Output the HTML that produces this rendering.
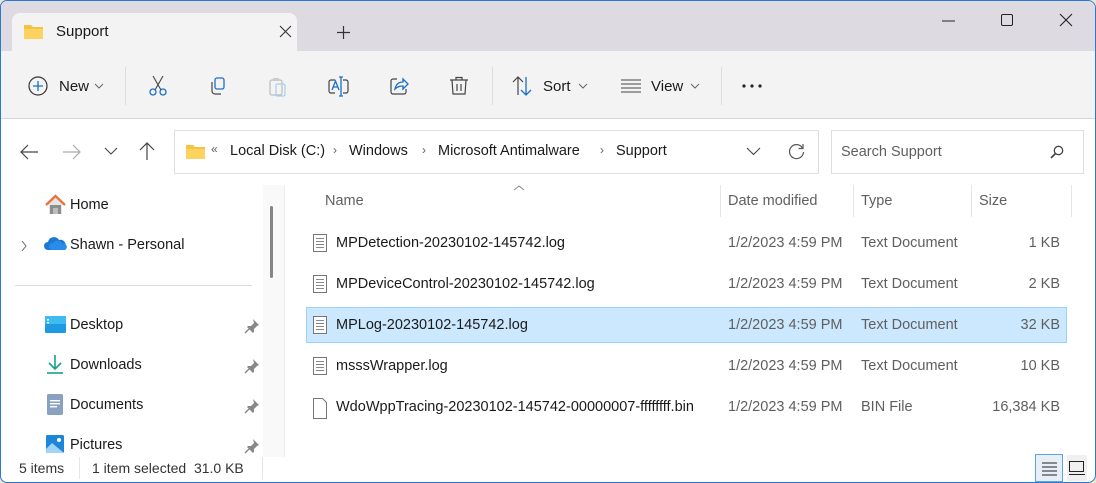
<!DOCTYPE html>
<html><head><meta charset="utf-8"><style>
*{margin:0;padding:0;box-sizing:border-box}
body{width:1096px;height:483px;background:#efe6cf;font-family:"Liberation Sans",sans-serif;font-size:14.5px;color:#1a1a1a;overflow:hidden;position:relative}
.win{position:absolute;left:0;top:0;width:1096px;height:483px;border:1px solid #2a78cf;border-radius:7px 8px 8px 7px;background:#fff;overflow:hidden}
.a{position:absolute;white-space:nowrap}
.g{color:#5f5f5f}
svg{position:absolute;overflow:visible}
</style></head><body><div class="win">
<div class="a" style="left:0;top:0;width:1096px;height:50px;background:#dddbe1"></div>
<div class="a" style="left:11px;top:12px;width:285px;height:40px;background:#f3f3f3;border-radius:8px 8px 0 0"></div>
<div class="a" style="left:0;top:50px;width:1096px;height:68px;background:#f3f3f3;border-bottom:1px solid #d5d5d5"></div>
<!-- tab -->
<svg style="left:23px;top:23px" width="20" height="16"><path d="M0 1h7l2 2h10v12H0z" fill="#f5c244"/><path d="M0 5h19v10H0z" fill="#fcd35f"/></svg>
<div class="a" style="left:55px;top:22px;font-size:15px">Support</div>
<svg style="left:279px;top:25px" width="11" height="11"><path d="M0 0L11 11M11 0L0 11" stroke="#333" stroke-width="1.1"/></svg>
<svg style="left:336px;top:25px" width="13" height="13"><path d="M6.5 0v13M0 6.5h13" stroke="#333" stroke-width="1.2"/></svg>
<svg style="left:941px;top:19px" width="13" height="2"><path d="M0 1h13" stroke="#222" stroke-width="1"/></svg>
<svg style="left:1000px;top:13px" width="12" height="12"><rect x=".5" y=".5" width="11" height="11" rx="1.5" fill="none" stroke="#222"/></svg>
<svg style="left:1059px;top:13px" width="12" height="12"><path d="M0 0L12 12M12 0L0 12" stroke="#222" stroke-width="1.1"/></svg>
<!-- toolbar -->
<svg style="left:27px;top:75px" width="20" height="20"><circle cx="10" cy="10" r="9" fill="none" stroke="#333" stroke-width="1.2"/><path d="M10 5v10M5 10h10" stroke="#1a6fc9" stroke-width="1.3"/></svg>
<div class="a" style="left:58px;top:77px;font-size:15px">New</div>
<svg style="left:94px;top:83px" width="8" height="5"><path d="M0 0l4 4 4-4" fill="none" stroke="#666"/></svg>
<div class="a" style="left:124px;top:66px;width:1px;height:38px;background:#ddd"></div>
<svg style="left:147px;top:75px" width="20" height="20"><path d="M5 0l8 14M15 0L7 14" stroke="#444" stroke-width="1.1"/><circle cx="5" cy="16" r="3" fill="none" stroke="#1a6fc9" stroke-width="1.3"/><circle cx="15" cy="16" r="3" fill="none" stroke="#1a6fc9" stroke-width="1.3"/></svg>
<svg style="left:208px;top:76px" width="20" height="20"><rect x="6" y="1" width="9" height="11" rx="2" fill="none" stroke="#1a6fc9" stroke-width="1.3"/><path d="M3 5v9a3 3 0 0 0 3 3h6" fill="none" stroke="#444" stroke-width="1.2"/></svg>
<svg style="left:268px;top:76px" width="20" height="20"><rect x="1" y="3" width="12" height="15" rx="2" fill="none" stroke="#bbb" stroke-width="1.2"/><rect x="7" y="7" width="9" height="12" rx="1.5" fill="none" stroke="#a9cdef" stroke-width="1.2"/><rect x="4" y="1" width="6" height="3" fill="#ccc"/></svg>
<svg style="left:327px;top:76px" width="22" height="20"><path d="M7 3H3a2 2 0 0 0-2 2v9a2 2 0 0 0 2 2h4M15 3h3a2 2 0 0 1 2 2v9a2 2 0 0 1-2 2h-3" fill="none" stroke="#444" stroke-width="1.2"/><path d="M4 13l3.5-9 3.5 9M5.3 10h4.4" fill="none" stroke="#1a6fc9" stroke-width="1.3"/><path d="M13 0v19M11 0h4M11 19h4" stroke="#1a6fc9" stroke-width="1.3"/></svg>
<svg style="left:388px;top:75px" width="20" height="20"><path d="M8 3H4a2 2 0 0 0-2 2v11a2 2 0 0 0 2 2h11a2 2 0 0 0 2-2v-3" fill="none" stroke="#444" stroke-width="1.2"/><path d="M6 13c1-5 4-7 8-7V3l5 5-5 5V10c-3 0-6 1-8 3z" fill="none" stroke="#1a6fc9" stroke-width="1.3"/></svg>
<svg style="left:448px;top:75px" width="20" height="20"><path d="M1 4h18M7 4V1.5h6V4M3 4l1 14h12l1-14M8 8v7M12 8v7" fill="none" stroke="#444" stroke-width="1.2"/></svg>
<div class="a" style="left:491px;top:66px;width:1px;height:38px;background:#ddd"></div>
<svg style="left:511px;top:75px" width="22" height="20"><path d="M6 19V1M1 6l5-5 5 5" fill="none" stroke="#444" stroke-width="1.2"/><path d="M14 1v18M9 14l5 5 5-5" fill="none" stroke="#1a6fc9" stroke-width="1.3"/></svg>
<div class="a" style="left:542px;top:77px;font-size:15px">Sort</div>
<svg style="left:578px;top:83px" width="8" height="5"><path d="M0 0l4 4 4-4" fill="none" stroke="#666"/></svg>
<svg style="left:620px;top:78px" width="20" height="14"><path d="M0 1h20M0 5h20M0 9h20M0 13h20" stroke="#444" stroke-width="1.1"/></svg>
<div class="a" style="left:650px;top:77px;font-size:15px">View</div>
<svg style="left:690px;top:83px" width="8" height="5"><path d="M0 0l4 4 4-4" fill="none" stroke="#666"/></svg>
<div class="a" style="left:720px;top:66px;width:1px;height:38px;background:#ddd"></div>
<svg style="left:741px;top:83px" width="22" height="4"><circle cx="2" cy="2" r="1.6" fill="#222"/><circle cx="10" cy="2" r="1.6" fill="#222"/><circle cx="18" cy="2" r="1.6" fill="#222"/></svg>
<!-- nav -->
<svg style="left:19px;top:143px" width="18" height="16"><path d="M18 8H1M8 1L1 8l7 7" fill="none" stroke="#444" stroke-width="1.2"/></svg>
<svg style="left:62px;top:143px" width="18" height="16"><path d="M0 8h17M10 1l7 7-7 7" fill="none" stroke="#aaa" stroke-width="1.2"/></svg>
<svg style="left:104px;top:147px" width="12" height="7"><path d="M0 0l6 6 6-6" fill="none" stroke="#444" stroke-width="1.1"/></svg>
<svg style="left:138px;top:141px" width="16" height="18"><path d="M8 18V1M1 8l7-7 7 7" fill="none" stroke="#444" stroke-width="1.2"/></svg>
<div class="a" style="left:173px;top:129px;width:645px;height:44px;border:1px solid #dedede"></div>
<svg style="left:185px;top:143px" width="19" height="15"><path d="M0 1h7l2 2h10v12H0z" fill="#f5c244"/><path d="M0 5h19v10H0z" fill="#fcd35f"/></svg>
<div class="a g" style="left:210px;top:141px;font-size:12px">«</div>
<div class="a" style="left:229px;top:142px">Local Disk (C:)</div>
<div class="a g" style="left:332px;top:142px;font-size:12px">›</div>
<div class="a" style="left:348px;top:142px">Windows</div>
<div class="a g" style="left:421px;top:142px;font-size:12px">›</div>
<div class="a" style="left:437px;top:142px">Microsoft Antimalware</div>
<div class="a g" style="left:599px;top:142px;font-size:12px">›</div>
<div class="a" style="left:615px;top:142px">Support</div>
<svg style="left:746px;top:147px" width="13" height="7"><path d="M0 0l6.5 6.5L13 0" fill="none" stroke="#444" stroke-width="1.1"/></svg>
<svg style="left:787px;top:142px" width="17" height="17"><path d="M14.5 5A7 7 0 1 0 15.5 9" fill="none" stroke="#555" stroke-width="1.2"/><path d="M15 1v4.5h-4.5" fill="none" stroke="#555" stroke-width="1.2"/></svg>
<div class="a" style="left:830px;top:129px;width:253px;height:44px;border:1px solid #dedede"></div>
<div class="a g" style="left:840px;top:143px">Search Support</div>
<svg style="left:1049px;top:144px" width="14" height="14"><circle cx="8.5" cy="5.5" r="4.2" fill="none" stroke="#444" stroke-width="1.3"/><path d="M5.5 8.5L1 13" stroke="#444" stroke-width="1.6"/></svg>
<!-- sidebar -->
<svg style="left:44px;top:194px" width="21" height="19"><path d="M10.5 1L1 10h3v9h13v-9h3z" fill="#e6e6e6"/><path d="M1 10L10.5 1 20 10" fill="none" stroke="#e8743b" stroke-width="2.4"/><rect x="5" y="10" width="11" height="9" fill="#8d8d8d"/><rect x="8" y="13" width="5" height="6" fill="#bcbcbc"/></svg>
<div class="a" style="left:69px;top:196px">Home</div>
<svg style="left:20px;top:240px" width="6" height="10"><path d="M1 0l4 5-4 5" fill="none" stroke="#666"/></svg>
<svg style="left:43px;top:235px" width="22" height="15"><path d="M4 14a4 4 0 0 1 0-8 6 6 0 0 1 11-2 5 5 0 0 1 3 10z" fill="#1b78d2"/><path d="M8 14a3.5 3.5 0 0 1 1-7 5 5 0 0 1 9 1 3 3 0 0 1 3 6z" fill="#2a8bea"/></svg>
<div class="a" style="left:69px;top:236px">Shawn - Personal</div>
<div class="a" style="left:14px;top:284px;width:237px;height:1px;background:#dcdcdc"></div>
<svg style="left:44px;top:315px" width="21" height="17"><rect width="21" height="17" rx="1" fill="#1e9be0"/><rect y="0" width="21" height="8" fill="#3cbcf0"/><rect x="2" y="3" width="2" height="1.5" fill="#fff"/><rect x="2" y="6" width="2" height="1.5" fill="#fff"/></svg>
<div class="a" style="left:69px;top:316px">Desktop</div>
<svg style="left:45px;top:354px" width="18" height="19"><path d="M9 0v13M3 8l6 6 6-6" fill="none" stroke="#13a388" stroke-width="1.6"/><path d="M1 18h16" stroke="#13a388" stroke-width="1.6"/></svg>
<div class="a" style="left:69px;top:356px">Downloads</div>
<svg style="left:46px;top:393px" width="16" height="21"><rect width="16" height="21" rx="1.5" fill="#8aa1bf"/><rect x="3" y="6" width="10" height="1.4" fill="#fff"/><rect x="3" y="9" width="10" height="1.4" fill="#fff"/><rect x="3" y="12" width="7" height="1.4" fill="#fff"/></svg>
<div class="a" style="left:69px;top:396px">Documents</div>
<svg style="left:45px;top:434px" width="18" height="18"><rect width="18" height="18" rx="1.5" fill="#1e86d8"/><path d="M0 14l6-6 12 10H0z" fill="#9fd3f7"/><circle cx="13" cy="5" r="2" fill="#fff"/></svg>
<div class="a" style="left:69px;top:436px">Pictures</div>
<svg style="left:244px;top:318px" width="14" height="14"><path d="M8 0l6 6-2 1-3 3 0 3-1 1-6-6 1-1 3 0 3-3z" fill="#888"/><path d="M4 10L0 14" stroke="#888" stroke-width="1.5"/></svg>
<svg style="left:244px;top:358px" width="14" height="14"><path d="M8 0l6 6-2 1-3 3 0 3-1 1-6-6 1-1 3 0 3-3z" fill="#888"/><path d="M4 10L0 14" stroke="#888" stroke-width="1.5"/></svg>
<svg style="left:244px;top:398px" width="14" height="14"><path d="M8 0l6 6-2 1-3 3 0 3-1 1-6-6 1-1 3 0 3-3z" fill="#888"/><path d="M4 10L0 14" stroke="#888" stroke-width="1.5"/></svg>
<svg style="left:244px;top:438px" width="14" height="14"><path d="M8 0l6 6-2 1-3 3 0 3-1 1-6-6 1-1 3 0 3-3z" fill="#888"/><path d="M4 10L0 14" stroke="#888" stroke-width="1.5"/></svg>
<div class="a" style="left:262px;top:184px;width:21px;height:272px;background:#f9f9f9"></div>
<div class="a" style="left:269px;top:205px;width:3px;height:72px;background:#858585;border-radius:2px"></div>
<div class="a" style="left:283px;top:184px;width:1px;height:272px;background:#ececec"></div>
<!-- header -->
<svg style="left:513px;top:184px" width="10" height="6"><path d="M0 5l5-4 5 4" fill="none" stroke="#888"/></svg>
<div class="a g" style="left:324px;top:192px">Name</div>
<div class="a" style="left:719px;top:184px;width:1px;height:32px;background:#e5e5e5"></div>
<div class="a g" style="left:727px;top:192px">Date modified</div>
<div class="a" style="left:852px;top:184px;width:1px;height:32px;background:#e5e5e5"></div>
<div class="a g" style="left:860px;top:192px">Type</div>
<div class="a" style="left:970px;top:184px;width:1px;height:32px;background:#e5e5e5"></div>
<div class="a g" style="left:978px;top:192px">Size</div>
<div class="a" style="left:1070px;top:184px;width:1px;height:32px;background:#e5e5e5"></div>
<!-- rows -->
<div class="a" style="left:305px;top:306px;width:761px;height:36px;background:#cce8ff;border:1px solid #99d1ff"></div>
<svg style="left:312px;top:231px" width="0" height="0"></svg>
<div id="rows"></div>
<svg style="left:312px;top:233px" width="14" height="185">
<g fill="#fff" stroke="#777" stroke-width="1"><rect x=".5" y=".5" width="13" height="17"/><rect x=".5" y="41.5" width="13" height="17"/><rect x=".5" y="82.5" width="13" height="17"/><rect x=".5" y="123.5" width="13" height="17"/><path d="M.5 164.5h9l4 4v16H.5z"/></g>
<g stroke="#888"><path d="M3 4.5h8M3 7.5h8M3 10.5h8M3 13.5h8M3 45.5h8M3 48.5h8M3 51.5h8M3 54.5h8M3 86.5h8M3 89.5h8M3 92.5h8M3 95.5h8M3 127.5h8M3 130.5h8M3 133.5h8M3 136.5h8"/></g></svg>
<div class="a" style="left:335px;top:234px">MPDetection-20230102-145742.log</div>
<div class="a" style="left:335px;top:275px">MPDeviceControl-20230102-145742.log</div>
<div class="a" style="left:335px;top:316px">MPLog-20230102-145742.log</div>
<div class="a" style="left:335px;top:357px">msssWrapper.log</div>
<div class="a" style="left:335px;top:398px">WdoWppTracing-20230102-145742-00000007-ffffffff.bin</div>
<div class="a g" style="left:727px;top:234px">1/2/2023 4:59 PM</div>
<div class="a g" style="left:727px;top:275px">1/2/2023 4:59 PM</div>
<div class="a g" style="left:727px;top:316px">1/2/2023 4:59 PM</div>
<div class="a g" style="left:727px;top:357px">1/2/2023 4:59 PM</div>
<div class="a g" style="left:727px;top:398px">1/2/2023 4:59 PM</div>
<div class="a g" style="left:860px;top:234px">Text Document</div>
<div class="a g" style="left:860px;top:275px">Text Document</div>
<div class="a g" style="left:860px;top:316px">Text Document</div>
<div class="a g" style="left:860px;top:357px">Text Document</div>
<div class="a g" style="left:860px;top:398px">BIN File</div>
<div class="a g" style="right:35px;top:234px">1 KB</div>
<div class="a g" style="right:35px;top:275px">2 KB</div>
<div class="a g" style="right:35px;top:316px">32 KB</div>
<div class="a g" style="right:35px;top:357px">10 KB</div>
<div class="a g" style="right:35px;top:398px">16,384 KB</div>
<!-- status -->
<div class="a" style="left:18px;top:459px;font-size:14px;color:#333">5 items</div>
<div class="a" style="left:78px;top:456px;width:1px;height:22px;background:#e5e5e5"></div>
<div class="a" style="left:91px;top:459px;font-size:14px;color:#333">1 item selected&nbsp; 31.0 KB</div>
<div class="a" style="left:261px;top:456px;width:1px;height:22px;background:#e5e5e5"></div>
<div class="a" style="left:1034px;top:453px;width:28px;height:28px;border:1px solid #5aa5e0;background:#e8eef5"></div>
<svg style="left:1041px;top:461px" width="15" height="13"><path d="M0 1h15M0 5h15M0 9h15M0 13h15" stroke="#222"/></svg>
<div class="a" style="left:1066px;top:454px;width:20px;height:26px;background:#f0f0f0"></div>
<svg style="left:1068px;top:460px" width="16" height="14"><rect x=".5" y=".5" width="14" height="10" fill="none" stroke="#222"/><path d="M0 13.5h16" stroke="#222"/></svg>
</div></body></html>
